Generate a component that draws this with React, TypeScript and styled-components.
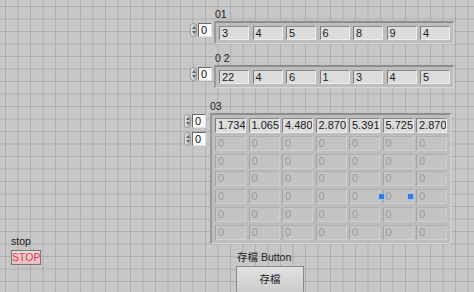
import React from "react";
import styled, { createGlobalStyle } from "styled-components";

const Global = createGlobalStyle`
  html, body { margin: 0; padding: 0; background: #c8c8c8; }
  #root { width: 474px; height: 292px; overflow: hidden; }
`;

const Panel = styled.div`
  position: relative;
  width: 474px;
  height: 292px;
  overflow: hidden;
  font-family: "Liberation Sans", "Noto Sans CJK TC", sans-serif;
  background-color: #c7c7c7;
  background-image:
    linear-gradient(to right, rgba(150,150,150,0.5) 1px, transparent 1px),
    linear-gradient(to bottom, rgba(150,150,150,0.5) 1px, transparent 1px);
  background-size: 12.5px 12.5px;
  background-position: 5px 6px;
`;

const Cluster = styled.div<{ $x: number; $y: number }>`
  position: absolute;
  left: ${(p) => p.$x}px;
  top: ${(p) => p.$y}px;
  display: flex;
  flex-direction: column;
`;

const Label = styled.div<{ $indent: number }>`
  margin-left: ${(p) => p.$indent}px;
  font-size: 10.5px;
  line-height: 11px;
  color: #222;
  height: 12px;
`;

const Body = styled.div`
  display: flex;
  align-items: flex-start;
`;

const IndexColumn = styled.div<{ $gap: number; $top: number }>`
  display: flex;
  flex-direction: column;
  gap: ${(p) => p.$gap}px;
  padding-top: ${(p) => p.$top}px;
`;

const IndexRow = styled.div`
  display: flex;
  align-items: center;
  gap: 1px;
`;

const Spinner = styled.div`
  width: 7px;
  height: 14px;
  border-radius: 4px;
  background: linear-gradient(to right, #e8e8e8, #b4b4b4);
  border: 1px solid #9a9a9a;
  box-sizing: border-box;
  display: flex;
  flex-direction: column;
  align-items: center;
  justify-content: space-between;
  padding: 2px 0;
`;

const Arrow = styled.div<{ $up?: boolean }>`
  width: 0;
  height: 0;
  border-left: 2px solid transparent;
  border-right: 2px solid transparent;
  ${(p) => (p.$up ? "border-bottom: 3px solid #666;" : "border-top: 3px solid #666;")}
`;

const IndexBox = styled.div`
  width: 14px;
  height: 14px;
  box-sizing: border-box;
  background: #fafafa;
  border-top: 1px solid #6a6a6a;
  border-left: 1px solid #6a6a6a;
  border-right: 1px solid #e0e0e0;
  border-bottom: 1px solid #e0e0e0;
  font-size: 11px;
  line-height: 12px;
  padding-left: 2px;
  color: #111;
`;

const Frame = styled.div<{ $cols: number; $cw: number; $ch: number; $cg: number; $rg: number; $ml: number }>`
  margin-left: ${(p) => p.$ml}px;
  display: grid;
  grid-template-columns: repeat(${(p) => p.$cols}, ${(p) => p.$cw}px);
  grid-auto-rows: ${(p) => p.$ch}px;
  column-gap: ${(p) => p.$cg}px;
  row-gap: ${(p) => p.$rg}px;
  padding: 3px;
  background: #bdbdbd;
  border-top: 2px solid #8e8e8e;
  border-left: 2px solid #9a9a9a;
  border-right: 1px solid #d6d6d6;
  border-bottom: 1px solid #d6d6d6;
`;

const Cell = styled.div<{ $off?: boolean }>`
  box-sizing: border-box;
  overflow: hidden;
  white-space: nowrap;
  font-size: 11px;
  line-height: 13px;
  padding-left: 2px;
  color: ${(p) => (p.$off ? "#9c9c9c" : "#1a1a1a")};
  background: ${(p) => (p.$off ? "#c3c3c3" : "#dcdcdc")};
  border-top: 1px solid ${(p) => (p.$off ? "#b0b0b0" : "#8a8a8a")};
  border-left: 1px solid ${(p) => (p.$off ? "#a4a4a4" : "#7c7c7c")};
  border-right: 1px solid ${(p) => (p.$off ? "#cfcfcf" : "#eeeeee")};
  border-bottom: 1px solid ${(p) => (p.$off ? "#cfcfcf" : "#eeeeee")};
`;

const Handle = styled.div<{ $x: number; $y: number }>`
  position: absolute;
  left: ${(p) => p.$x}px;
  top: ${(p) => p.$y}px;
  width: 5px;
  height: 5px;
  background: #2f7fd8;
  border: 1px solid #9cc4f0;
`;

const Wire = styled.div`
  position: absolute;
  left: 386px;
  top: 196px;
  width: 22px;
  height: 0;
  border-top: 1px dashed rgba(220, 160, 110, 0.35);
`;

const SmallLabel = styled.div`
  font-size: 10.5px;
  line-height: 11px;
  color: #222;
  margin-bottom: 3px;
`;

const StopButton = styled.div`
  width: 30px;
  height: 15px;
  box-sizing: border-box;
  background: linear-gradient(#f0d8da, #e2c2c4);
  border: 1px solid #777;
  color: #e2324c;
  font-size: 10.5px;
  line-height: 13px;
  text-align: center;
`;

const SaveButton = styled.div`
  margin-left: -1px;
  width: 68px;
  height: 28px;
  box-sizing: border-box;
  background: linear-gradient(#e0e0e0, #cbcbcb);
  border: 1px solid #8a8a8a;
  border-bottom: none;
  color: #222;
  font-size: 10.5px;
  line-height: 24px;
  text-align: center;
`;

type ArrayProps = {
  x: number;
  y: number;
  label: string;
  labelIndent: number;
  indices: number;
  rows: string[][];
  activeRows: number;
  cw: number;
  ch: number;
  cg: number;
  rg: number;
  ml: number;
  idxGap: number;
  idxTop: number;
};

function ArrayControl(p: ArrayProps) {
  return (
    <Cluster $x={p.x} $y={p.y}>
      <Label $indent={p.labelIndent}>{p.label}</Label>
      <Body>
        <IndexColumn $gap={p.idxGap} $top={p.idxTop}>
          {Array.from({ length: p.indices }).map((_, i) => (
            <IndexRow key={i}>
              <Spinner>
                <Arrow $up />
                <Arrow />
              </Spinner>
              <IndexBox>0</IndexBox>
            </IndexRow>
          ))}
        </IndexColumn>
        <Frame $cols={p.rows[0].length} $cw={p.cw} $ch={p.ch} $cg={p.cg} $rg={p.rg} $ml={p.ml}>
          {p.rows.map((r, ri) =>
            r.map((v, ci) => (
              <Cell key={`${ri}-${ci}`} $off={ri >= p.activeRows}>
                {v}
              </Cell>
            ))
          )}
        </Frame>
      </Body>
    </Cluster>
  );
}

const row3 = ["1.7349", "1.0657", "4.4804", "2.8701", "5.3910", "5.7254", "2.8701"];
const zeros = Array.from({ length: 6 }).map(() => Array(7).fill("0"));

export default function App() {
  return (
    <Panel>
      <Global />
      <ArrayControl
        x={190}
        y={9}
        label="01"
        labelIndent={25}
        indices={1}
        rows={[["3", "4", "5", "6", "8", "9", "4"]]}
        activeRows={1}
        cw={30}
        ch={14}
        cg={3.5}
        rg={0}
        ml={2}
        idxGap={0}
        idxTop={2}
      />
      <ArrayControl
        x={190}
        y={53}
        label="0 2"
        labelIndent={25}
        indices={1}
        rows={[["22", "4", "6", "1", "3", "4", "5"]]}
        activeRows={1}
        cw={30}
        ch={14}
        cg={3.5}
        rg={0}
        ml={2}
        idxGap={0}
        idxTop={2}
      />
      <ArrayControl
        x={184}
        y={101}
        label="03"
        labelIndent={26}
        indices={2}
        rows={[row3, ...zeros]}
        activeRows={1}
        cw={31}
        ch={15}
        cg={2.5}
        rg={2.8}
        ml={4}
        idxGap={4}
        idxTop={1}
      />
      <Wire />
      <Handle $x={378} $y={193} />
      <Handle $x={407} $y={193} />
      <Cluster $x={11} $y={236}>
        <SmallLabel>stop</SmallLabel>
        <StopButton>STOP</StopButton>
      </Cluster>
      <Cluster $x={237} $y={252}>
        <SmallLabel>存檔 Button</SmallLabel>
        <SaveButton>存檔</SaveButton>
      </Cluster>
    </Panel>
  );
}
